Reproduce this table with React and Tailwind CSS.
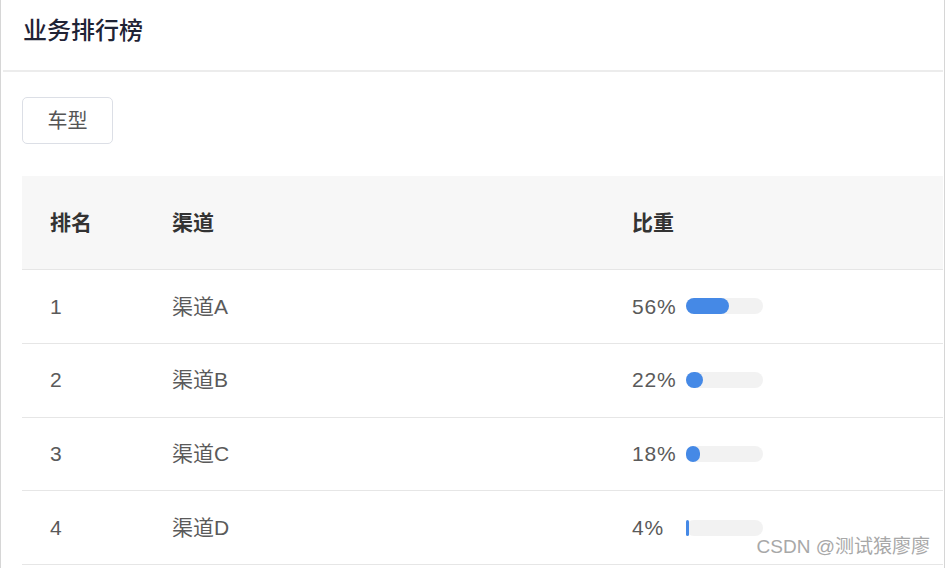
const rows = [
  { rank: 1, name: "渠道A", pct: 56 },
  { rank: 2, name: "渠道B", pct: 22 },
  { rank: 3, name: "渠道C", pct: 18 },
  { rank: 4, name: "渠道D", pct: 4 },
];

function Bar({ pct }) {
  return (
    <div className="h-[16px] w-[77px] rounded-full bg-[#f2f2f2]">
      <div className="h-full rounded-full bg-[#4589e6]" style={{ width: `${pct}%` }} />
    </div>
  );
}

export default function App() {
  return (
    <div className="relative w-[945px] h-[568px] bg-white border-l border-r border-[#d6d6d6] overflow-hidden font-['Liberation_Sans','Noto_Sans_CJK_SC',sans-serif]">
      <div className="h-[72px] pl-[20px] pb-[8px] flex items-center ml-[2px] mr-[1px] border-b-2 border-[#ececec]">
        <h1 className="text-[24px] font-medium text-[#1f2335]">业务排行榜</h1>
      </div>

      <div className="pl-[21px] pt-[25px]">
        <button className="w-[91px] h-[47px] rounded-[5px] border border-[#dcdfe6] text-[20px] text-[#555] bg-white">
          车型
        </button>
      </div>

      <div className="ml-[21px] mr-[1px] mt-[32px]">
        <div className="grid grid-cols-[122px_460px_1fr] h-[94px] items-center bg-[#f7f7f7] border-b border-[#e6e6e6] text-[21px] font-bold text-[#333]">
          <div className="pl-[28px]">排名</div>
          <div className="pl-[28px]">渠道</div>
          <div className="pl-[28px]">比重</div>
        </div>
        {rows.map((r) => (
          <div
            key={r.rank}
            className="grid grid-cols-[122px_460px_1fr] h-[73.75px] items-center border-b border-[#e6e6e6] text-[21px] text-[#5a5a5a]"
          >
            <div className="pl-[28px]">{r.rank}</div>
            <div className="pl-[28px]">{r.name}</div>
            <div className="pl-[28px] flex items-center">
              <span className="w-[54px] tracking-[0.8px]">{r.pct}%</span>
              <Bar pct={r.pct} />
            </div>
          </div>
        ))}
      </div>

      <div className="absolute right-[14px] bottom-[7px] text-[19px] text-[#a8a8a8]">
        CSDN @测试猿廖廖
      </div>
    </div>
  );
}
